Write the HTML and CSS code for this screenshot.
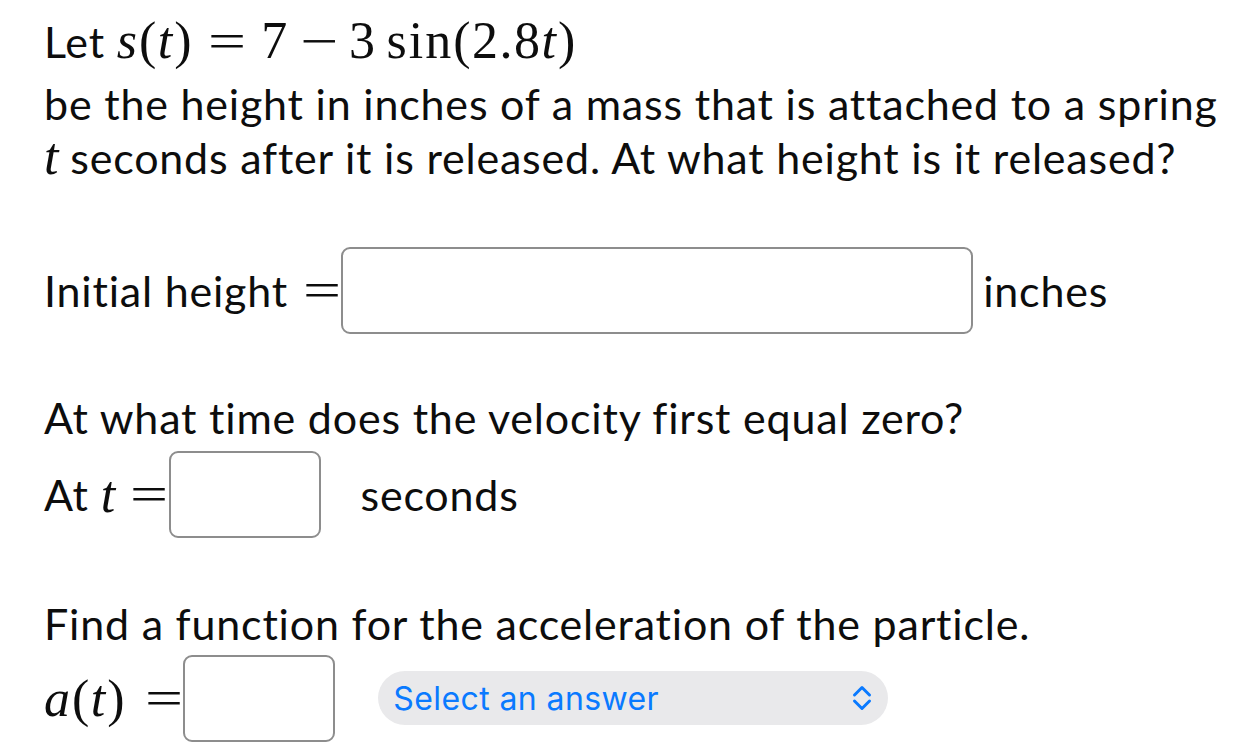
FILE: index.html
```html
<!DOCTYPE html>
<html>
<head>
<meta charset="utf-8">
<link rel="stylesheet" href="styles.css">
</head>
<body>
<div class="page">
  <div class="line l1">Let <span class="math"><i>s</i>(<i>t</i>)<span class="op rel">=</span>7<span class="op bin">−</span>3<span class="fn">sin</span>(2.8<i>t</i>)</span></div>
  <div class="line l2">be the height in inches of a mass that is attached to a spring</div>
  <div class="line l3"><span class="mvar">t</span> seconds after it is released. At what height is it released?</div>

  <div class="row r1">
    <span class="label">Initial height</span>
    <span class="eq">=</span>
    <span class="box wide"></span>
    <span class="unit">inches</span>
  </div>

  <div class="line q2">At what time does the velocity first equal zero?</div>

  <div class="row r2">
    <span class="label">At</span>
    <span class="mvar tvar">t</span>
    <span class="eq">=</span>
    <span class="box small"></span>
    <span class="unit far">seconds</span>
  </div>

  <div class="line q3">Find a function for the acceleration of the particle.</div>

  <div class="row r3">
    <span class="math"><i>a</i>(<i>t</i>)</span>
    <span class="eq">=</span>
    <span class="box small"></span>
    <div class="select">
      <span class="sel-text">Select an answer</span>
      <svg class="chev" width="22" height="28" viewBox="0 0 22 28"><path d="M3.5 11 L11 3.5 L18.5 11 M3.5 17 L11 24.5 L18.5 17" fill="none" stroke="#0a7aff" stroke-width="3" stroke-linecap="round" stroke-linejoin="round"/></svg>
    </div>
  </div>
</div>
</body>
</html>
```

FILE: styles.css
```css
html, body {
  margin: 0;
  padding: 0;
  background: #ffffff;
}
body {
  font-family: "Lato", "Noto Sans", sans-serif;
  font-size: 43px;
  letter-spacing: 0.8px;
  font-variant-ligatures: none;
  color: #0d0d0d;
}
.page {
  padding: 12px 0 0 44px;
}
.line {
  height: 53px;
  line-height: 52px;
  white-space: nowrap;
}
.l1 {
  height: 66px;
  line-height: 58px;
}
.math {
  font-family: "Liberation Serif", "DejaVu Serif", serif;
  font-size: 52px;
  letter-spacing: 1.5px;
}
.math i, .mvar {
  font-family: "Liberation Serif", "DejaVu Serif", serif;
  font-style: italic;
  letter-spacing: 0;
}
.mvar {
  font-size: 52px;
}
.math i {
  padding-right: 2px;
}
.op {
  display: inline-block;
  font-family: "Liberation Serif", serif;
  font-size: 50px;
  letter-spacing: 0;
  transform: scaleX(1.35);
}
.op.rel {
  margin: 0 20px;
}
.op.bin {
  margin: 0 16px;
}
.fn {
  margin-left: 10px;
  letter-spacing: 2px;
}
.row {
  display: flex;
  align-items: center;
  white-space: nowrap;
}
.r1 {
  margin-top: 62px;
  height: 88px;
}
.q2 {
  margin-top: 58px;
}
.r2 {
  margin-top: 5px;
  height: 88px;
}
.q3 {
  margin-top: 60px;
}
.r3 {
  margin-top: 2px;
  height: 90px;
}
.eq {
  display: inline-block;
  font-family: "Liberation Serif", serif;
  font-size: 50px;
  letter-spacing: 0;
  margin-left: 20px;
  margin-right: 5px;
  transform: scaleX(1.35);
}
.r3 .eq {
  margin-left: 24px;
}
.tvar {
  margin-left: 12px;
}
.box {
  display: inline-block;
  box-sizing: border-box;
  border: 2px solid #8d8d8d;
  border-radius: 9px;
  height: 87px;
  background: #fff;
}
.box.wide {
  width: 632px;
}
.box.small {
  width: 152px;
}
.unit {
  margin-left: 10px;
}
.unit.far {
  margin-left: 40px;
}
.select {
  margin-left: 43px;
  width: 510px;
  height: 54px;
  box-sizing: border-box;
  border-radius: 27px;
  background: #e9e9eb;
  display: flex;
  align-items: center;
  justify-content: space-between;
  padding: 0 15px 0 15px;
}
.sel-text {
  font-family: "Inter", "Roboto", sans-serif;
  font-size: 32px;
  letter-spacing: 0.4px;
  color: #0a7aff;
}
.chev {
  display: block;
}
```
